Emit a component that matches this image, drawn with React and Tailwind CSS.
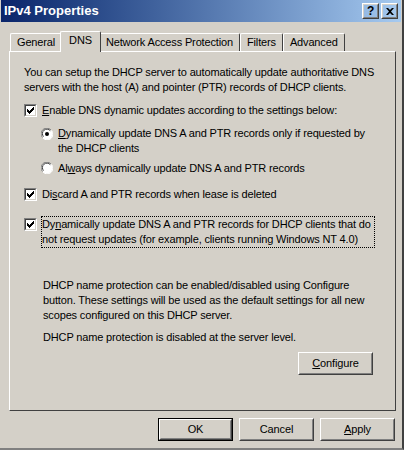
const font = "font-['Liberation_Sans',Arial,sans-serif]";

function Check({ checked }) {
  return (
    <span className="flex h-[13px] w-[13px] shrink-0 border border-t-[#808080] border-l-[#808080] border-r-white border-b-white">
      <span className="flex h-full w-full items-center justify-center border border-t-[#404040] border-l-[#404040] border-r-[#d4d0c8] border-b-[#d4d0c8] bg-white">
        {checked && (
          <svg width="7" height="7" viewBox="0 0 7 7">
            <path d="M0 2h1v1h1v1h1v-1h1v-1h1v-1h1v-1h1v3h-1v1h-1v1h-1v1h-1v1h-1v-1h-1v-1h-1v-1h-1z" fill="#000" />
          </svg>
        )}
      </span>
    </span>
  );
}

function Radio({ checked }) {
  return (
    <svg width="12" height="12" viewBox="0 0 12 12" className="shrink-0">
      <circle cx="6" cy="6" r="5.5" fill="#fff" />
      <path d="M10 2 A5.5 5.5 0 0 0 1.5 9.5" stroke="#808080" strokeWidth="1" fill="none" />
      <path d="M9.3 2.7 A4.5 4.5 0 0 0 2.5 8.6" stroke="#404040" strokeWidth="1" fill="none" />
      <path d="M2 10 A5.5 5.5 0 0 0 10.5 2.5" stroke="#fff" strokeWidth="1" fill="none" />
      {checked && <circle cx="6" cy="6" r="2" fill="#000" />}
    </svg>
  );
}

function Button({ children, def, className = "" }) {
  return (
    <div className={`${def ? "border border-black" : ""} ${className}`}>
      <div className="h-full w-full border border-t-white border-l-white border-r-[#404040] border-b-[#404040]">
        <div className="flex h-full w-full items-center justify-center border border-t-[#d4d0c8] border-l-[#d4d0c8] border-r-[#808080] border-b-[#808080] text-[11px] text-black">
          {children}
        </div>
      </div>
    </div>
  );
}

function Tab({ label, active }) {
  return (
    <div
      className={`flex items-center border-l border-t border-r border-l-white border-t-white border-r-[#404040] rounded-t-[2px] ${
        active ? "relative z-10 -mb-px -mx-[2px] h-[21px] bg-[#d4d0c8] px-[8px] pb-[3px]" : "mt-[2px] h-[18px] px-[6px]"
      }`}
    >
      {label}
    </div>
  );
}

export default function App() {
  return (
    <div className={`${font} flex h-[450px] w-[404px] flex-col border-b-2 border-r-2 border-b-[#808080] border-r-[#404040] bg-[#d4d0c8] text-[11px] tracking-[-0.15px] text-black`}>
      <div className="mx-px flex h-[22px] shrink-0 items-center bg-gradient-to-r from-[#0a246a] to-[#a6caf0] pl-[3px] pr-[3px]">
        <span className="text-[13px] font-bold tracking-normal text-white">IPv4 Properties</span>
        <div className="ml-auto flex gap-[2px]">
          <Button className="h-[16px] w-[17px]">
            <span className="text-[12px] font-bold leading-none">?</span>
          </Button>
          <Button className="h-[16px] w-[17px]">
            <svg width="8" height="7" viewBox="0 0 8 7">
              <path d="M0 0h2l2 2 2-2h2L5 3.5 8 7H6L4 5 2 7H0l3-3.5z" fill="#000" />
            </svg>
          </Button>
        </div>
      </div>

      <div className="ml-[10px] mt-[9px] flex shrink-0 items-end">
        <Tab label="General" />
        <Tab label="DNS" active />
        <Tab label="Network Access Protection" />
        <Tab label="Filters" />
        <Tab label="Advanced" />
      </div>

      <div className="ml-[9px] mr-[6px] flex h-[360px] shrink-0 flex-col border border-l-white border-t-white border-r-[#404040] border-b-[#404040] pl-[14px] pr-[6px] pt-[13px]">
        <p className="leading-[15px]">
          You can setup the DHCP server to automatically update authoritative DNS servers with the host (A) and pointer (PTR) records of DHCP clients.
        </p>

        <label className="mt-[7px] flex items-center gap-[5px]">
          <Check checked />
          <span>
            <u>E</u>nable DNS dynamic updates according to the settings below:
          </span>
        </label>

        <div className="ml-[17px] mt-[7px] flex items-start gap-[5px] pr-[8px]">
          <span className="mt-[2px]">
            <Radio checked />
          </span>
          <span className="leading-[15px]">
            <u>D</u>ynamically update DNS A and PTR records only if requested by the DHCP clients
          </span>
        </div>

        <div className="ml-[17px] mt-[4px] flex items-center gap-[5px]">
          <Radio />
          <span>
            Al<u>w</u>ays dynamically update DNS A and PTR records
          </span>
        </div>

        <label className="mt-[10px] flex items-center gap-[5px]">
          <Check checked />
          <span>
            Di<u>s</u>card A and PTR records when lease is deleted
          </span>
        </label>

        <label className="mt-[13px] flex items-start gap-[4px]">
          <span className="mt-[2px]">
            <Check checked />
          </span>
          <span className="mr-[14px] border border-dotted border-black leading-[15px]">
            Dy<u>n</u>amically update DNS A and PTR records for DHCP clients that do not request updates (for example, clients running Windows NT 4.0)
          </span>
        </label>

        <p className="ml-[19px] mr-[14px] mt-[30px] leading-[15px]">
          DHCP name protection can be enabled/disabled using Configure button. These settings will be used as the default settings for all new scopes configured on this DHCP server.
        </p>

        <p className="ml-[19px] mt-[6px]">DHCP name protection is disabled at the server level.</p>

        <div className="mr-[16px] mt-[7px] flex justify-end">
          <Button className="h-[23px] w-[75px]">
            <u>C</u>onfigure
          </Button>
        </div>
      </div>

      <div className="mr-[7px] mt-[7px] flex justify-end gap-[6px]">
        <Button def className="h-[23px] w-[75px]">OK</Button>
        <Button className="h-[23px] w-[75px]">Cancel</Button>
        <Button className="h-[23px] w-[75px]">
          <u>A</u>pply
        </Button>
      </div>
    </div>
  );
}
